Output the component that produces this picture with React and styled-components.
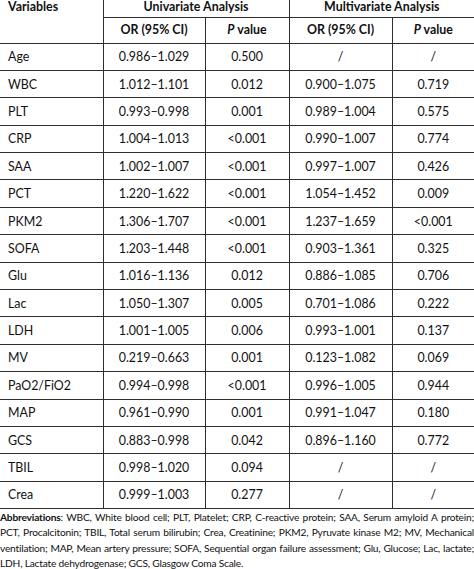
import React from "react";
import styled, { createGlobalStyle } from "styled-components";

const GlobalStyle = createGlobalStyle`
  html, body {
    margin: 0;
    padding: 0;
    background: #fff;
  }
  body {
    font-family: Lato, "Open Sans", sans-serif;
    color: #111;
  }
`;

const rows = [
  ["Age", "0.986–1.029", "0.500", "/", "/"],
  ["WBC", "1.012–1.101", "0.012", "0.900–1.075", "0.719"],
  ["PLT", "0.993–0.998", "0.001", "0.989–1.004", "0.575"],
  ["CRP", "1.004–1.013", "<0.001", "0.990–1.007", "0.774"],
  ["SAA", "1.002–1.007", "<0.001", "0.997–1.007", "0.426"],
  ["PCT", "1.220–1.622", "<0.001", "1.054–1.452", "0.009"],
  ["PKM2", "1.306–1.707", "<0.001", "1.237–1.659", "<0.001"],
  ["SOFA", "1.203–1.448", "<0.001", "0.903–1.361", "0.325"],
  ["Glu", "1.016–1.136", "0.012", "0.886–1.085", "0.706"],
  ["Lac", "1.050–1.307", "0.005", "0.701–1.086", "0.222"],
  ["LDH", "1.001–1.005", "0.006", "0.993–1.001", "0.137"],
  ["MV", "0.219–0.663", "0.001", "0.123–1.082", "0.069"],
  ["PaO2/FiO2", "0.994–0.998", "<0.001", "0.996–1.005", "0.944"],
  ["MAP", "0.961–0.990", "0.001", "0.991–1.047", "0.180"],
  ["GCS", "0.883–0.998", "0.042", "0.896–1.160", "0.772"],
  ["TBIL", "0.998–1.020", "0.094", "/", "/"],
  ["Crea", "0.999–1.003", "0.277", "/", "/"],
];

const Page = styled.div`
  width: 474px;
`;

const Table = styled.table`
  width: 474px;
  border-collapse: collapse;
  table-layout: fixed;
  font-size: 12.4px;
`;

const HeadCell = styled.th`
  font-weight: 700;
  text-align: ${(p) => (p.$left ? "left" : "center")};
  vertical-align: ${(p) => (p.$top ? "top" : "middle")};
  padding: ${(p) => (p.$left ? "0 0 0 8px" : "0")};
  line-height: 14px;
  border-left: ${(p) => (p.$left ? "none" : "1px solid #2e2e2e")};
  border-bottom: 1px solid #2e2e2e;
  white-space: nowrap;

  i {
    font-style: italic;
  }
`;

const GroupRow = styled.tr`
  height: 17px;
`;

const SubRow = styled.tr`
  height: 26px;
`;

const DataRow = styled.tr`
  height: 27.4px;
`;

const Cell = styled.td`
  text-align: ${(p) => (p.$left ? "left" : "center")};
  padding: ${(p) => (p.$left ? "0 0 0 8px" : "0")};
  border-left: ${(p) => (p.$left ? "none" : "1px solid #2e2e2e")};
  border-bottom: 1px solid #2e2e2e;
  white-space: nowrap;
`;

const Note = styled.div`
  margin-top: 1px;
  font-size: 10.2px;
  line-height: 15.2px;
  letter-spacing: -0.2px;
  color: #111;

  b {
    font-weight: 700;
  }
`;

const NoteLine = styled.span`
  display: block;
  white-space: nowrap;
  text-align: ${(p) => (p.$last ? "left" : "justify")};
  text-align-last: ${(p) => (p.$last ? "left" : "justify")};
`;

const App = () => {
  return (
    <Page>
      <GlobalStyle />
      <Table>
        <colgroup>
          <col style={{ width: 103 }} />
          <col style={{ width: 102 }} />
          <col style={{ width: 84 }} />
          <col style={{ width: 103 }} />
          <col style={{ width: 82 }} />
        </colgroup>
        <thead>
          <GroupRow>
            <HeadCell $left $top rowSpan={2}>
              Variables
            </HeadCell>
            <HeadCell colSpan={2} $top>
              Univariate Analysis
            </HeadCell>
            <HeadCell colSpan={2} $top>
              Multivariate Analysis
            </HeadCell>
          </GroupRow>
          <SubRow>
            <HeadCell>OR (95% CI)</HeadCell>
            <HeadCell>
              <i>P</i> value
            </HeadCell>
            <HeadCell>OR (95% CI)</HeadCell>
            <HeadCell>
              <i>P</i> value
            </HeadCell>
          </SubRow>
        </thead>
        <tbody>
          {rows.map((r) => (
            <DataRow key={r[0]}>
              <Cell $left>{r[0]}</Cell>
              <Cell>{r[1]}</Cell>
              <Cell>{r[2]}</Cell>
              <Cell>{r[3]}</Cell>
              <Cell>{r[4]}</Cell>
            </DataRow>
          ))}
        </tbody>
      </Table>
      <Note>
        <NoteLine>
          <b>Abbreviations</b>: WBC, White blood cell; PLT, Platelet; CRP,
          C-reactive protein; SAA, Serum amyloid A protein;
        </NoteLine>
        <NoteLine>
          PCT, Procalcitonin; TBIL, Total serum bilirubin; Crea, Creatinine;
          PKM2, Pyruvate kinase M2; MV, Mechanical
        </NoteLine>
        <NoteLine>
          ventilation; MAP, Mean artery pressure; SOFA, Sequential organ
          failure assessment; Glu, Glucose; Lac, lactate;
        </NoteLine>
        <NoteLine $last>
          LDH, Lactate dehydrogenase; GCS, Glasgow Coma Scale.
        </NoteLine>
      </Note>
    </Page>
  );
};

export default App;
